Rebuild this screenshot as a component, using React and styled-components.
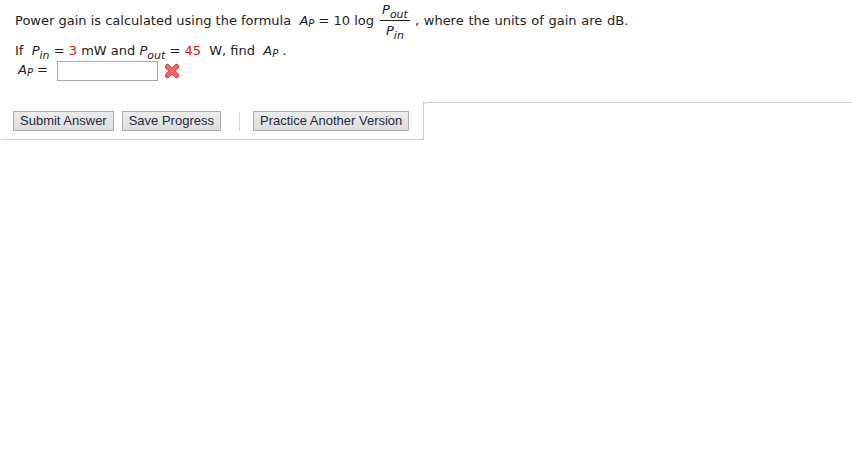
import React from "react";
import styled, { createGlobalStyle } from "styled-components";

const Global = createGlobalStyle`
  html, body { margin: 0; padding: 0; background: #fff; }
  body { font-family: "DejaVu Sans", Verdana, sans-serif; color: #1d1d1d; }
`;

const Page = styled.div`
  width: 852px;
`;

const Question = styled.div`
  padding: 0 0 0 15px;
  font-size: 13px;
`;

const Line = styled.div`
  white-space: pre;
  height: ${(p) => p.$h || 20}px;
  line-height: ${(p) => p.$h || 20}px;
  padding-left: ${(p) => p.$indent || 0}px;
`;

const Var = styled.span`
  font-style: italic;
`;

const Sub = styled.span`
  font-size: ${(p) => p.$size || 11}px;
  font-style: italic;
  vertical-align: -${(p) => p.$drop || 4}px;
  line-height: 0;
`;

const Num = styled.span`
  color: #e01010;
`;

const Frac = styled.span`
  display: inline-flex;
  flex-direction: column;
  align-items: center;
  vertical-align: middle;
  margin: 0 5px 0 6px;
  line-height: 13px;
`;

const FracTop = styled.span`
  padding: 0 2px 4px;
  border-bottom: 1px solid #1d1d1d;
`;

const FracBottom = styled.span`
  padding-top: 3px;
  padding-bottom: 3px;
`;

const Tail = styled.span`
  word-spacing: 0.6px;
`;

const Answer = styled.input`
  box-sizing: border-box;
  width: 101px;
  height: 20px;
  margin: 0 6px 0 9px;
  border: 1px solid #a9a9a9;
  padding: 0 3px;
  font: 13px "DejaVu Sans", sans-serif;
  vertical-align: middle;
  outline: none;
`;

const Mark = styled.svg`
  vertical-align: middle;
`;

const Footer = styled.div`
  display: flex;
  margin-top: 22px;
`;

const ButtonBar = styled.div`
  display: flex;
  align-items: center;
  flex: none;
  box-sizing: border-box;
  width: 424px;
  padding: 9px 0 8px 13px;
  border-bottom: 1px solid #cfcfcf;
  border-right: 1px solid #cfcfcf;
  border-bottom-left-radius: 3px;
  border-bottom-right-radius: 4px;
`;

const Filler = styled.div`
  flex: 1;
  margin-left: -1px;
  border-top: 1px solid #cfcfcf;
  border-left: 1px solid #cfcfcf;
  border-top-left-radius: 4px;
`;

const Button = styled.button`
  box-sizing: border-box;
  flex: none;
  white-space: nowrap;
  height: 20px;
  padding: 0 6px;
  margin-right: ${(p) => p.$mr || 0}px;
  font: 13px "Liberation Sans", Arial, sans-serif;
  color: #1f2a3a;
  background: linear-gradient(#ececec, #dddddd);
  border: 1px solid #adadad;
  border-radius: 0;
  line-height: 18px;
`;

const Divider = styled.span`
  flex: none;
  width: 1px;
  height: 19px;
  background: #d4d4d4;
  margin: 0 13px 0 0;
`;

function WrongMark() {
  return (
    <Mark width="16" height="16" viewBox="0 0 16 16" aria-hidden="true">
      <path d="M3.5 3.5 L12.5 12.5 M12.5 3.5 L3.5 12.5" stroke="#c93a3a" strokeWidth="5" strokeLinecap="round" />
      <path d="M3.5 3.5 L12.5 12.5 M12.5 3.5 L3.5 12.5" stroke="#f06868" strokeWidth="3.4" strokeLinecap="round" />
    </Mark>
  );
}

function AP() {
  return (
    <Var>
      A<Sub $size={10} $drop={2}>P</Sub>
    </Var>
  );
}

export default function App() {
  return (
    <Page>
      <Global />
      <Question>
        <Line $h={42}>
          Power gain is calculated using the formula  <AP /> = 10 log
          <Frac>
            <FracTop>
              <Var>P</Var>
              <Sub>out</Sub>
            </FracTop>
            <FracBottom>
              <Var>P</Var>
              <Sub>in</Sub>
            </FracBottom>
          </Frac>
          <Tail>, where the units of gain are dB.</Tail>
        </Line>
        <Line $h={18}>
          If  <Var>P</Var>
          <Sub>in</Sub> = <Num>3</Num> mW and <Var>P</Var>
          <Sub>out</Sub> = <Num>45</Num>  W, find  <AP /> .
        </Line>
        <Line $indent={3}>
          <AP /> =<Answer aria-label="A_P" />
          <WrongMark />
        </Line>
      </Question>
      <Footer>
        <ButtonBar>
          <Button $mr={8}>Submit Answer</Button>
          <Button $mr={18}>Save Progress</Button>
          <Divider />
          <Button>Practice Another Version</Button>
        </ButtonBar>
        <Filler />
      </Footer>
    </Page>
  );
}
